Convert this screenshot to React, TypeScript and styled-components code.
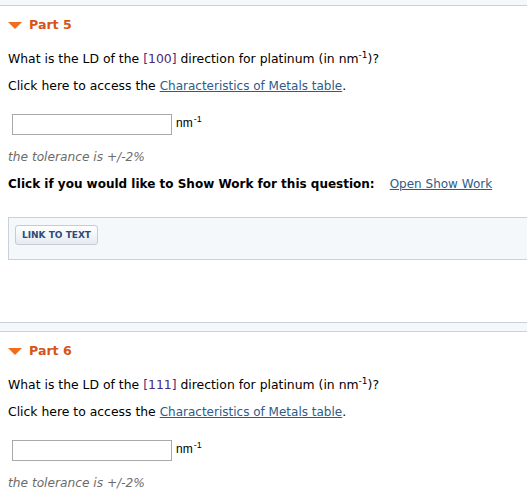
import React from "react";
import styled, { createGlobalStyle } from "styled-components";

const Global = createGlobalStyle`
  html, body { margin: 0; padding: 0; background: #fff; }
  body { font-family: "DejaVu Sans", Verdana, sans-serif; font-size: 12.4px; color: #000; overflow: hidden; }
`;

const Page = styled.div`
  width: 527px;
  display: flex;
  flex-direction: column;
`;

const Divider = styled.div<{ $top?: boolean }>`
  height: ${(p) => (p.$top ? "5px" : "8px")};
  background: #f5f8fb;
  border-bottom: 1px solid #c9d1dc;
  border-top: ${(p) => (p.$top ? "none" : "1px solid #c9d1dc")};
`;

const Part = styled.section`
  padding: 0 0 0 8px;
  display: flex;
  flex-direction: column;
`;

const Header = styled.div`
  display: flex;
  align-items: center;
  gap: 7px;
  height: 18px;
  margin-top: 9px;
  color: #d65419;
  font-weight: bold;
  font-size: 12.6px;
`;

const Tri = styled.span`
  width: 0;
  height: 0;
  border-left: 7px solid transparent;
  border-right: 7px solid transparent;
  border-top: 7px solid #f26c1c;
  margin-top: 2px;
`;

const Line = styled.p<{ $mt: number }>`
  margin: ${(p) => p.$mt}px 0 0;
  line-height: 18px;
  font-size: 12.4px;
  white-space: nowrap;
`;

const Dir = styled.span`
  color: #4d2a75;
`;

const Sup = styled.sup`
  font-size: 9px;
  line-height: 0;
  vertical-align: 5px;
`;

const Link = styled.a`
  color: #2d5c8a;
  text-decoration: underline;
  cursor: pointer;
`;

const MetalsLink = styled(Link)`
  font-size: 12px;
`;

const AnswerRow = styled.div`
  display: flex;
  align-items: flex-start;
  gap: 4px;
  margin: 19px 0 0 4px;
`;

const Input = styled.input`
  box-sizing: border-box;
  width: 160px;
  height: 21px;
  border: 1px solid #a9a9a9;
  margin: 0;
  padding: 0 3px;
  font-size: 12px;
`;

const Unit = styled.span`
  font-family: "Liberation Sans", Arial, sans-serif;
  font-size: 12px;
  line-height: 16px;
  margin-top: 1px;
`;

const UnitSup = styled.sup`
  font-size: 9px;
  line-height: 0;
  vertical-align: 5px;
  margin-left: 1px;
`;

const Tolerance = styled.p`
  margin: 13px 0 0;
  font-style: italic;
  color: #6b6b6b;
  font-size: 12.2px;
  line-height: 18px;
`;

const ShowWork = styled.div`
  display: flex;
  align-items: center;
  margin-top: 9px;
  line-height: 18px;
  white-space: nowrap;
`;

const Bold = styled.strong`
  font-weight: bold;
  font-size: 12px;
  margin-right: 15px;
`;

const SmallLink = styled(Link)`
  font-size: 12px;
`;

const LinkBox = styled.div`
  margin-top: 24px;
  height: 43px;
  box-sizing: border-box;
  width: 530px;
  background: #f5f8fb;
  border: 1px solid #c9d1dc;
  padding: 7px 0 0 6px;
`;

const Button = styled.button`
  height: 20px;
  padding: 0 6px;
  border: 1px solid #c3ccd8;
  border-radius: 3px;
  background: linear-gradient(#ffffff, #e6ebf1);
  color: #2b4b78;
  font-family: "DejaVu Sans", Verdana, sans-serif;
  font-weight: bold;
  font-size: 9px;
  cursor: pointer;
`;

const Spacer = styled.div`
  height: 62px;
`;

type PartProps = { n: number; dir: string; extra?: boolean };

function PartBlock({ n, dir, extra }: PartProps) {
  return (
    <Part>
      <Header>
        <Tri />
        <span>Part {n}</span>
      </Header>
      <Line $mt={17}>
        What is the LD of the <Dir>[{dir}]</Dir> direction for platinum (in nm<Sup>-1</Sup>)?
      </Line>
      <Line $mt={9}>
        Click here to access the <MetalsLink>Characteristics of Metals table</MetalsLink>.
      </Line>
      <AnswerRow>
        <Input type="text" />
        <Unit>
          nm<UnitSup>-1</UnitSup>
        </Unit>
      </AnswerRow>
      <Tolerance>the tolerance is +/-2%</Tolerance>
      {extra && (
        <>
          <ShowWork>
            <Bold>Click if you would like to Show Work for this question:</Bold>
            <SmallLink>Open Show Work</SmallLink>
          </ShowWork>
          <LinkBox>
            <Button>LINK TO TEXT</Button>
          </LinkBox>
          <Spacer />
        </>
      )}
    </Part>
  );
}

export default function App() {
  return (
    <>
      <Global />
      <Page>
        <Divider $top />
        <PartBlock n={5} dir="100" extra />
        <Divider />
        <PartBlock n={6} dir="111" />
      </Page>
    </>
  );
}
